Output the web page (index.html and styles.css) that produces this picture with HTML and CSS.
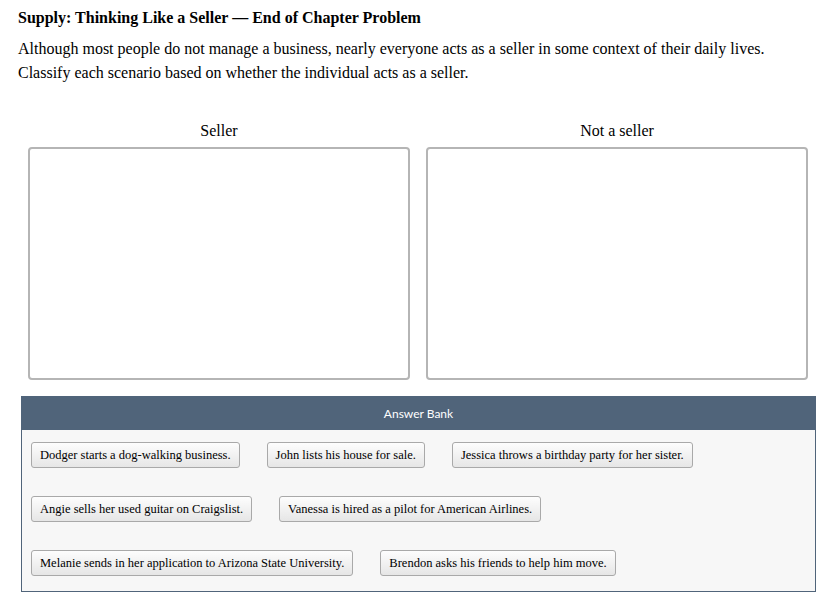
FILE: index.html
```html
<!DOCTYPE html>
<html lang="en">
<head>
<meta charset="utf-8">
<title>Supply: Thinking Like a Seller</title>
<link rel="stylesheet" href="styles.css">
</head>
<body>
<main class="problem">
  <h1 class="problem-title">Supply: Thinking Like a Seller — End of Chapter Problem</h1>
  <p class="problem-text">Although most people do not manage a business, nearly everyone acts as a seller in some context of their daily lives. Classify each scenario based on whether the individual acts as a seller.</p>

  <section class="bins">
    <div class="bin">
      <div class="bin-label">Seller</div>
      <div class="bin-drop"></div>
    </div>
    <div class="bin">
      <div class="bin-label">Not a seller</div>
      <div class="bin-drop"></div>
    </div>
  </section>

  <section class="bank">
    <header class="bank-head">Answer Bank</header>
    <div class="bank-body">
      <div class="bank-row">
        <span class="chip">Dodger starts a dog-walking business.</span>
        <span class="chip">John lists his house for sale.</span>
        <span class="chip">Jessica throws a birthday party for her sister.</span>
      </div>
      <div class="bank-row">
        <span class="chip">Angie sells her used guitar on Craigslist.</span>
        <span class="chip">Vanessa is hired as a pilot for American Airlines.</span>
      </div>
      <div class="bank-row">
        <span class="chip">Melanie sends in her application to Arizona State University.</span>
        <span class="chip">Brendon asks his friends to help him move.</span>
      </div>
    </div>
  </section>
</main>
</body>
</html>
```

FILE: styles.css
```css
html, body {
  margin: 0;
  padding: 0;
  background: #ffffff;
}

body {
  font-family: "Liberation Serif", "Times New Roman", serif;
  color: #000;
}

.problem {
  padding: 8px 0 0 18px;
  width: 800px;
}

.problem-title {
  margin: 0;
  font-size: 16px;
  line-height: 20px;
  font-weight: bold;
}

.problem-text {
  margin: 9px 0 0 0;
  font-size: 16px;
  line-height: 24px;
}

.bins {
  display: flex;
  gap: 16px;
  margin: 36px 0 0 10px;
}

.bin {
  width: 382px;
  display: flex;
  flex-direction: column;
}

.bin-label {
  text-align: center;
  font-size: 16px;
  line-height: 20px;
  margin-bottom: 6px;
}

.bin-drop {
  height: 229px;
  border: 2px solid #b5b5b5;
  border-radius: 4px;
}

.bank {
  margin: 16px 0 0 3px;
  width: 793px;
  border: 1px solid #50647a;
  background: #f7f7f7;
}

.bank-head {
  background: #50647a;
  color: #ffffff;
  font-family: Lato, "Open Sans", sans-serif;
  font-size: 12px;
  line-height: 33px;
  height: 33px;
  text-align: center;
}

.bank-body {
  padding: 12px 9px 15px 9px;
  display: flex;
  flex-direction: column;
  gap: 28px;
}

.bank-row {
  display: flex;
  gap: 27px;
}

.chip {
  display: inline-block;
  height: 24px;
  line-height: 24px;
  padding: 0 8px;
  font-size: 12.5px;
  border: 1px solid #a9a9a9;
  border-radius: 3px;
  background: linear-gradient(#fdfdfd, #e6e6e6);
  white-space: nowrap;
}
```
